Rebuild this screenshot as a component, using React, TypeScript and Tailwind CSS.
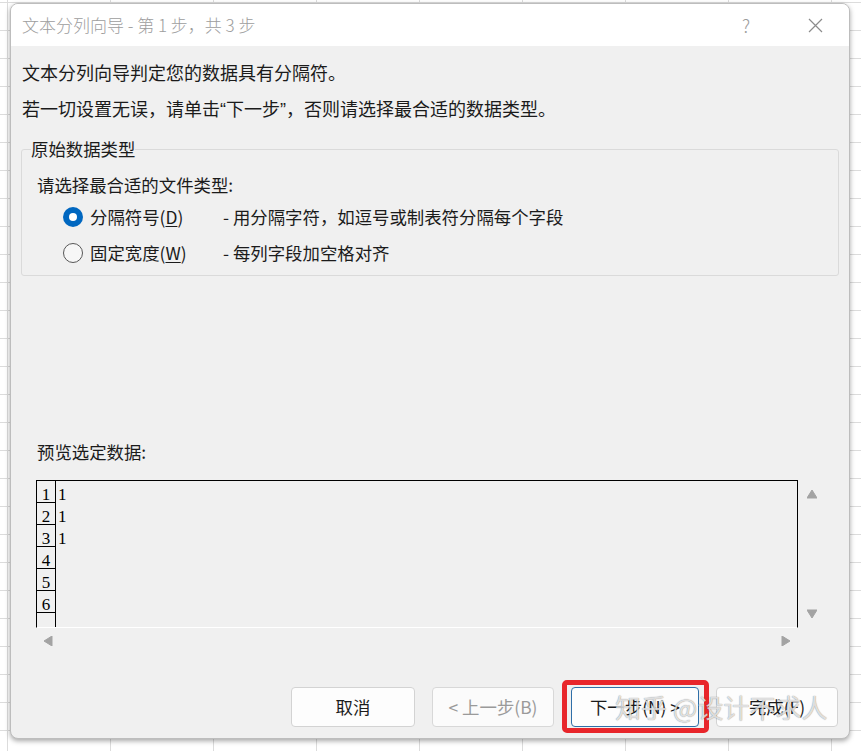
import React from 'react';

const rows = ['1', '1', '1', '', '', ''];

function Radio({ checked }: { checked: boolean }) {
  if (checked) {
    return (
      <span className="flex h-[20px] w-[20px] shrink-0 items-center justify-center rounded-full bg-[#0067c0]">
        <span className="h-[8px] w-[8px] rounded-full bg-white" />
      </span>
    );
  }
  return <span className="h-[20px] w-[20px] shrink-0 rounded-full border border-[#575757] bg-[#f7f7f7]" />;
}

function Tri({ dir }: { dir: 'up' | 'down' | 'left' | 'right' }) {
  const pts = {
    up: '0,9 5,1 10,9',
    down: '0,1 5,9 10,1',
    left: '9,0 1,5 9,10',
    right: '1,0 9,5 1,10',
  }[dir];
  return (
    <svg width="10" height="10" viewBox="0 0 10 10">
      <polygon points={pts} fill="#a3a3a3" stroke="#a3a3a3" strokeWidth="1" strokeLinejoin="round" />
    </svg>
  );
}

export default function App() {
  return (
    <div className="h-[751px] w-[861px] overflow-hidden bg-white bg-[linear-gradient(to_right,#dcdcdc_1px,transparent_1px),linear-gradient(to_bottom,#dcdcdc_1px,transparent_1px)] bg-[size:103px_28px] bg-[position:7px_2px] pl-[10px] pt-[3px] font-['Noto_Sans_CJK_SC','Noto_Sans',sans-serif] text-[17.4px] text-[#1b1b1b]">
      {/* dialog */}
      <div className="flex h-[736px] w-[840px] flex-col overflow-hidden rounded-[8px] border border-[#bdbdbd] bg-[#f0f0f0] shadow-[0_2px_5px_rgba(0,0,0,0.35)]">
        {/* title bar */}
        <div className="flex h-[42px] shrink-0 items-center bg-white pl-[11px] text-[#9d9d9d]">
          <span className="text-[17px] leading-[24px] font-light">文本分列向导 - 第 1 步，共 3 步</span>
          <span className="ml-auto mr-[58px] text-[18px] font-light leading-none">?</span>
          <svg width="15" height="15" viewBox="0 0 15 15" className="mr-[26px]">
            <path d="M1 1 L14 14 M14 1 L1 14" stroke="#8c8c8c" strokeWidth="1.2" />
          </svg>
        </div>

        {/* body */}
        <div className="flex flex-1 flex-col pl-[11px]">
          <div className="mt-[14px] text-[18px] leading-[24px]">文本分列向导判定您的数据具有分隔符。</div>
          <div className="mt-[12px] text-[18px] leading-[24px]">
            若一切设置无误，请单击<span className="font-['Liberation_Sans',sans-serif]">“</span>下一步<span className="font-['Liberation_Sans',sans-serif]">”</span>，否则请选择最合适的数据类型。
          </div>

          <fieldset className="-ml-[1px] mt-[15px] w-[818px] rounded-[3px] border border-[#dadada] pb-[10px] pl-[9px]">
            <legend className="leading-[24px]">原始数据类型</legend>
            <div className="mt-[12px] pl-[6px] leading-[24px]">请选择最合适的文件类型:</div>
            <div className="mt-[8px] flex items-center pl-[32px] leading-[24px]">
              <Radio checked />
              <span className="ml-[7px] w-[133px]">分隔符号(<span className="underline underline-offset-2">D</span>)</span>
              <span>- 用分隔字符，如逗号或制表符分隔每个字段</span>
            </div>
            <div className="mt-[12px] flex items-center pl-[32px] leading-[24px]">
              <Radio checked={false} />
              <span className="ml-[7px] w-[133px]">固定宽度(<span className="underline underline-offset-2">W</span>)</span>
              <span>- 每列字段加空格对齐</span>
            </div>
          </fieldset>

          <div className="ml-[15px] mt-[164px] leading-[24px]">预览选定数据:</div>

          <div className="mt-[16px] flex">
            {/* preview grid */}
            <div className="ml-[14px] h-[148px] w-[762px] overflow-hidden border-x border-t border-b border-x-black border-t-black border-b-white font-['Liberation_Serif',serif] text-[17px] text-black">
              {rows.map((v, i) => (
                <div key={i} className="flex h-[22px]">
                  <div className="flex w-[19px] shrink-0 items-end justify-center border-b border-r border-black leading-none">
                    <span className="mb-[-1px]">{i + 1}</span>
                  </div>
                  <div className="flex items-start pl-[2px] pt-[5px] leading-none">{v}</div>
                </div>
              ))}
              <div className="flex h-[30px]">
                <div className="w-[19px] shrink-0 border-r border-black" />
              </div>
            </div>
            {/* vertical scroll */}
            <div className="ml-[9px] flex h-[148px] flex-col justify-between pb-[9px] pt-[9px]">
              <Tri dir="up" />
              <Tri dir="down" />
            </div>
          </div>

          {/* horizontal scroll */}
          <div className="flex h-[25px] w-[770px] items-center justify-between pl-[21px] pr-[1px]">
            <Tri dir="left" />
            <Tri dir="right" />
          </div>

          {/* buttons */}
          <div className="relative ml-[269px] mt-[34px] flex gap-[17px]">
            <div className="flex h-[40px] w-[124px] items-center justify-center rounded-[4px] border border-[#d3d3d3] bg-[#fdfdfd]">
              取消
            </div>
            <div className="flex h-[40px] w-[122px] items-center justify-center rounded-[4px] border border-[#d8d8d8] bg-[#fbfbfb] text-[#9a9a9a]">
              &lt; 上一步(B)
            </div>
            <div className="relative flex h-[40px] w-[128px] items-center justify-center rounded-[4px] border border-[#2f6fa8] bg-[#fdfdfd]">
              下一步(N) &gt;
              <div className="pointer-events-none absolute -left-[10px] -top-[8px] h-[53px] w-[147px] rounded-[5px] border-[5px] border-[#e8262b]" />
            </div>
            <div className="flex h-[40px] w-[122px] items-center justify-center rounded-[4px] border border-[#d3d3d3] bg-[#fdfdfd]">
              完成(F)
            </div>
            <span className="pointer-events-none absolute left-[324px] top-[4px] whitespace-nowrap text-[26px] leading-[32px] text-white/75 [text-shadow:0_0_1px_rgba(0,0,0,0.55)]">
              知乎 @设计不求人
            </span>
          </div>
        </div>
      </div>
    </div>
  );
}
